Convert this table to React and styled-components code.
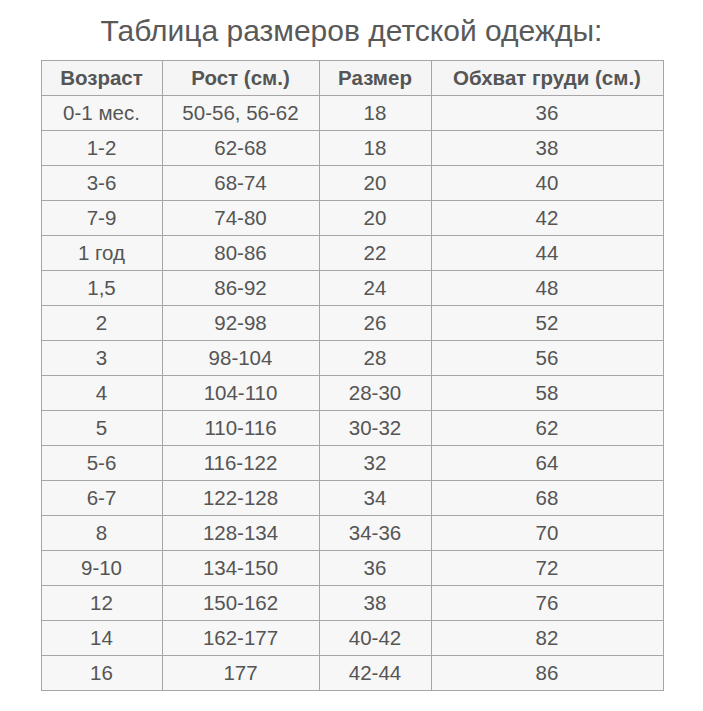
import React from "react";
import styled, { createGlobalStyle } from "styled-components";

const Global = createGlobalStyle`
  html, body { margin: 0; padding: 0; background: #ffffff; }
  body { font-family: "Liberation Sans", Arial, sans-serif; }
`;

const Page = styled.div`
  width: 703px;
  height: 711px;
  display: flex;
  flex-direction: column;
  align-items: center;
  background: #fff;
`;

const Title = styled.h1`
  margin: 10px 0 0 0;
  height: 50px;
  font-family: "Liberation Sans", Arial, sans-serif;
  font-weight: normal;
  font-size: 30px;
  line-height: 42px;
  color: #595959;
`;

const Table = styled.table`
  border-collapse: collapse;
  width: 622px;
  margin-left: 1px;
  table-layout: fixed;
  background: #f7f7f7;
  font-family: "Liberation Sans", Arial, sans-serif;
`;

const Th = styled.th`
  height: 34px;
  padding: 0;
  border: 1px solid #a6a6a6;
  font-size: 20.5px;
  font-weight: bold;
  color: #555;
  text-align: center;
  background: #f5f5f5;
  white-space: nowrap;
`;

const Td = styled.td`
  height: 34px;
  padding: 0;
  border: 1px solid #a6a6a6;
  font-size: 20.5px;
  color: #555;
  text-align: center;
  white-space: nowrap;
`;

const cols = [121, 157, 112, 232];
const head = ["Возраст", "Рост (см.)", "Размер", "Обхват груди (см.)"];
const rows = [
  ["0-1 мес.", "50-56, 56-62", "18", "36"],
  ["1-2", "62-68", "18", "38"],
  ["3-6", "68-74", "20", "40"],
  ["7-9", "74-80", "20", "42"],
  ["1 год", "80-86", "22", "44"],
  ["1,5", "86-92", "24", "48"],
  ["2", "92-98", "26", "52"],
  ["3", "98-104", "28", "56"],
  ["4", "104-110", "28-30", "58"],
  ["5", "110-116", "30-32", "62"],
  ["5-6", "116-122", "32", "64"],
  ["6-7", "122-128", "34", "68"],
  ["8", "128-134", "34-36", "70"],
  ["9-10", "134-150", "36", "72"],
  ["12", "150-162", "38", "76"],
  ["14", "162-177", "40-42", "82"],
  ["16", "177", "42-44", "86"],
];

export default function App() {
  return (
    <Page>
      <Global />
      <Title>Таблица размеров детской одежды:</Title>
      <Table>
        <colgroup>
          {cols.map((w, i) => (
            <col key={i} style={{ width: w }} />
          ))}
        </colgroup>
        <thead>
          <tr>
            {head.map((h) => (
              <Th key={h}>{h}</Th>
            ))}
          </tr>
        </thead>
        <tbody>
          {rows.map((r, i) => (
            <tr key={i}>
              {r.map((c, j) => (
                <Td key={j}>{c}</Td>
              ))}
            </tr>
          ))}
        </tbody>
      </Table>
    </Page>
  );
}
